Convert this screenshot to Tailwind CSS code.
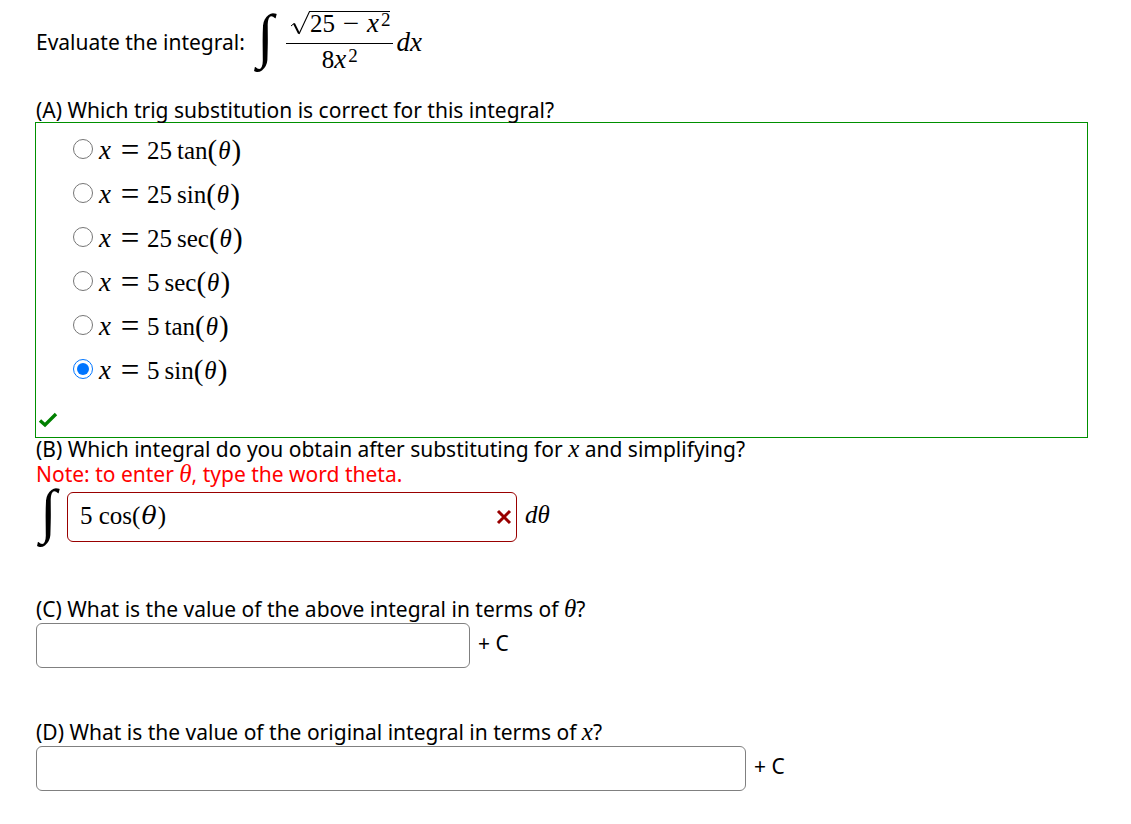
<!DOCTYPE html>
<html lang="en">
<head>
<meta charset="utf-8">
<meta name="viewport" content="width=device-width, initial-scale=1">
<title>Trigonometric substitution</title>
<script src="https://cdn.jsdelivr.net/npm/@tailwindcss/browser@4"></script>
</head>
<body class="bg-white font-['Noto_Sans',sans-serif] text-[21px] leading-[25px] text-black">
<main class="pl-9 pr-11 pt-2">
  <div class="flex h-[68px] items-center">
    <p>Evaluate the integral:</p>
    <div class="ml-2 flex items-center font-['Liberation_Serif',serif] text-[25px]">
      <i class="w-[25px] pb-3 pl-1 text-[60px] leading-[56px]">∫</i>
      <span class="ml-2 flex flex-col items-center">
        <span class="flex h-[34px] items-start pl-1 pr-[3px]">
          <svg class="h-[27px] w-5" viewBox="0 0 20 27" fill="none" stroke="black" aria-label="square root"><path d="M1 17L4 14.5" stroke-width="1"/><path d="M4 14.5L9 24.5" stroke-width="2"/><path d="M9 25L19.5 2.5H20" stroke-width="1.1"/></svg>
          <span class="mt-[2px] flex h-6 items-center border-t border-black"><span>25</span><span class="mx-[7px] w-[18px] text-center text-[29px]">−</span><i class="w-[14px] text-[27px]">x</i><span class="-mt-2 text-[19px]">2</span></span>
        </span>
        <span class="flex h-[32px] w-full items-center justify-center border-t border-black"><span>8</span><i class="w-[14px] text-[27px]">x</i><span class="-mt-2 text-[19px]">2</span></span>
      </span>
      <i class="ml-[3px] text-[27px]">dx</i>
    </div>
  </div>

  <fieldset class="mt-[22px]">
    <legend>(A) Which trig substitution is correct for this integral?</legend>
    <div class="-mx-px -my-px border border-[#009000] pb-[5px]">
      <div class="flex flex-col pl-[37px] pt-[5px] font-['Liberation_Serif',serif] text-[25px]">
        <label class="flex h-11 items-center gap-[6px]"><input type="radio" name="sub" class="mb-[2px] size-5 accent-[#0075ff]"><span class="flex items-center"><i class="w-[14px] text-[27px]">x</i><span class="mx-[7px] w-5 text-center text-[33px]">=</span><span>25</span><span class="ml-[5px] flex items-center">tan<span class="text-[29px]">(</span><i class="px-px">θ</i><span class="text-[29px]">)</span></span></span></label>
        <label class="flex h-11 items-center gap-[6px]"><input type="radio" name="sub" class="mb-[2px] size-5 accent-[#0075ff]"><span class="flex items-center"><i class="w-[14px] text-[27px]">x</i><span class="mx-[7px] w-5 text-center text-[33px]">=</span><span>25</span><span class="ml-[5px] flex items-center">sin<span class="text-[29px]">(</span><i class="px-px">θ</i><span class="text-[29px]">)</span></span></span></label>
        <label class="flex h-11 items-center gap-[6px]"><input type="radio" name="sub" class="mb-[2px] size-5 accent-[#0075ff]"><span class="flex items-center"><i class="w-[14px] text-[27px]">x</i><span class="mx-[7px] w-5 text-center text-[33px]">=</span><span>25</span><span class="ml-[5px] flex items-center">sec<span class="text-[29px]">(</span><i class="px-px">θ</i><span class="text-[29px]">)</span></span></span></label>
        <label class="flex h-11 items-center gap-[6px]"><input type="radio" name="sub" class="mb-[2px] size-5 accent-[#0075ff]"><span class="flex items-center"><i class="w-[14px] text-[27px]">x</i><span class="mx-[7px] w-5 text-center text-[33px]">=</span><span>5</span><span class="ml-[5px] flex items-center">sec<span class="text-[29px]">(</span><i class="px-px">θ</i><span class="text-[29px]">)</span></span></span></label>
        <label class="flex h-11 items-center gap-[6px]"><input type="radio" name="sub" class="mb-[2px] size-5 accent-[#0075ff]"><span class="flex items-center"><i class="w-[14px] text-[27px]">x</i><span class="mx-[7px] w-5 text-center text-[33px]">=</span><span>5</span><span class="ml-[5px] flex items-center">tan<span class="text-[29px]">(</span><i class="px-px">θ</i><span class="text-[29px]">)</span></span></span></label>
        <label class="flex h-11 items-center gap-[6px]"><input type="radio" name="sub" checked class="mb-[2px] size-5 accent-[#0075ff]"><span class="flex items-center"><i class="w-[14px] text-[27px]">x</i><span class="mx-[7px] w-5 text-center text-[33px]">=</span><span>5</span><span class="ml-[5px] flex items-center">sin<span class="text-[29px]">(</span><i class="px-px">θ</i><span class="text-[29px]">)</span></span></span></label>
      </div>
      <svg class="ml-[2px] mt-[18px] h-[22px] w-5" viewBox="0 0 20 22" fill="none" stroke="#008000" stroke-width="3.4" aria-label="Correct"><path d="M2 10.5L7 15L18 4"/></svg>
    </div>
  </fieldset>

  <section>
    <p>(B) Which integral do you obtain after substituting for <i class="font-['Liberation_Serif',serif] text-[25px] leading-[0px]">x</i> and simplifying?</p>
    <p class="text-[#ff0000]">Note: to enter <i class="font-['Liberation_Serif',serif] text-[25px] leading-[0px]">θ</i>, type the word theta.</p>
    <div class="flex h-[60px] items-center">
      <i class="w-[31px] pb-3 pl-1 font-['Liberation_Serif',serif] text-[60px] leading-[56px]">∫</i>
      <div class="flex h-[50px] w-[450px] items-center rounded-md border border-[#990000] pl-3 pr-1">
        <input type="text" aria-label="Integral after substituting" value="5 cos(𝜃)" class="min-w-0 flex-1 font-['Liberation_Serif','DejaVu_Math_TeX_Gyre',serif] text-[25px] outline-none">
        <svg class="size-4" viewBox="0 0 16 16" stroke="#990000" stroke-width="3" aria-label="Incorrect"><path d="M2 2L14 14M14 2L2 14"/></svg>
      </div>
      <i class="ml-2 pb-1.5 font-['Liberation_Serif',serif] text-[25px]">dθ</i>
    </div>
  </section>

  <section class="mt-[50px]">
    <label for="c" class="mb-px block">(C) What is the value of the above integral in terms of <i class="font-['Liberation_Serif',serif] text-[25px] leading-[0px]">θ</i>?</label>
    <div class="flex items-center gap-2"><input id="c" type="text" class="h-[45px] w-[434px] rounded-md border border-[#808080] px-3"><span class="pb-1">+ C</span></div>
  </section>

  <section class="mt-[52px]">
    <label for="d" class="mb-px block">(D) What is the value of the original integral in terms of <i class="font-['Liberation_Serif',serif] text-[25px] leading-[0px]">x</i>?</label>
    <div class="flex items-center gap-2"><input id="d" type="text" class="h-[45px] w-[710px] rounded-md border border-[#808080] px-3"><span class="pb-1">+ C</span></div>
  </section>
</main>
</body>
</html>
